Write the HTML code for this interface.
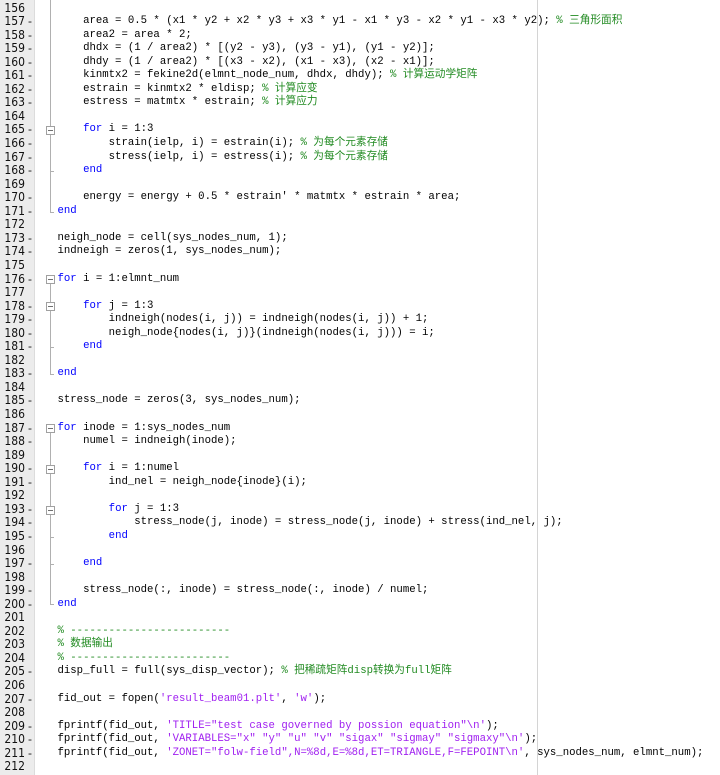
<!DOCTYPE html>
<html><head><meta charset="utf-8"><style>
body{margin:0;width:720px;height:775px;background:#fff;position:relative;overflow:hidden}
#g{position:absolute;left:0;top:0;width:34px;height:775px;background:#ececec;border-right:1px solid #dcdcdc}
.ln{position:absolute;left:0;width:25px;text-align:right;font:12px "DejaVu Sans Condensed","Liberation Sans",sans-serif;color:#111;height:13.55px;line-height:13.55px}
.d{position:absolute;left:28px;font:12px "Liberation Sans",sans-serif;color:#222;line-height:13.55px}
.c{position:absolute;left:57.5px;white-space:pre;font:10.67px "Liberation Mono","Noto Sans CJK SC",monospace;color:#000;line-height:13.55px;height:13.55px}
.k{color:#0000ff}.m{color:#228b22}.s{color:#a020f0}
#rm{position:absolute;left:537px;top:0;width:1px;height:775px;background:#d4d4d4}
.vl{position:absolute;left:50px;width:1px;background:#b0b0b0}
.tk{position:absolute;left:50px;width:4px;height:1px;background:#b0b0b0}
.bx{position:absolute;left:46px;width:7px;height:7px;border:1px solid #a0a0a0;background:#fff;box-sizing:content-box}
.bx:after{content:"";position:absolute;left:1px;top:3px;width:5px;height:1px;background:#707070}
</style></head><body>
<div id="g"></div><div id="rm"></div>
<div id="L"></div>
<script>
var T=1.5,H=13.55;
var code={
157:'    area = 0.5 * (x1 * y2 + x2 * y3 + x3 * y1 - x1 * y3 - x2 * y1 - x3 * y2); <span class="m">% 三角形面积</span>',
158:'    area2 = area * 2;',
159:'    dhdx = (1 / area2) * [(y2 - y3), (y3 - y1), (y1 - y2)];',
160:'    dhdy = (1 / area2) * [(x3 - x2), (x1 - x3), (x2 - x1)];',
161:'    kinmtx2 = fekine2d(elmnt_node_num, dhdx, dhdy); <span class="m">% 计算运动学矩阵</span>',
162:'    estrain = kinmtx2 * eldisp; <span class="m">% 计算应变</span>',
163:'    estress = matmtx * estrain; <span class="m">% 计算应力</span>',
165:'    <span class="k">for</span> i = 1:3',
166:'        strain(ielp, i) = estrain(i); <span class="m">% 为每个元素存储</span>',
167:'        stress(ielp, i) = estress(i); <span class="m">% 为每个元素存储</span>',
168:'    <span class="k">end</span>',
170:"    energy = energy + 0.5 * estrain' * matmtx * estrain * area;",
171:'<span class="k">end</span>',
173:'neigh_node = cell(sys_nodes_num, 1);',
174:'indneigh = zeros(1, sys_nodes_num);',
176:'<span class="k">for</span> i = 1:elmnt_num',
178:'    <span class="k">for</span> j = 1:3',
179:'        indneigh(nodes(i, j)) = indneigh(nodes(i, j)) + 1;',
180:'        neigh_node{nodes(i, j)}(indneigh(nodes(i, j))) = i;',
181:'    <span class="k">end</span>',
183:'<span class="k">end</span>',
185:'stress_node = zeros(3, sys_nodes_num);',
187:'<span class="k">for</span> inode = 1:sys_nodes_num',
188:'    numel = indneigh(inode);',
190:'    <span class="k">for</span> i = 1:numel',
191:'        ind_nel = neigh_node{inode}(i);',
193:'        <span class="k">for</span> j = 1:3',
194:'            stress_node(j, inode) = stress_node(j, inode) + stress(ind_nel, j);',
195:'        <span class="k">end</span>',
197:'    <span class="k">end</span>',
199:'    stress_node(:, inode) = stress_node(:, inode) / numel;',
200:'<span class="k">end</span>',
202:'<span class="m">% -------------------------</span>',
203:'<span class="m">% 数据输出</span>',
204:'<span class="m">% -------------------------</span>',
205:'disp_full = full(sys_disp_vector); <span class="m">% 把稀疏矩阵disp转换为full矩阵</span>',
207:"fid_out = fopen(<span class=\"s\">'result_beam01.plt'</span>, <span class=\"s\">'w'</span>);",
209:"fprintf(fid_out, <span class=\"s\">'TITLE=\"test case governed by possion equation\"\\n'</span>);",
210:"fprintf(fid_out, <span class=\"s\">'VARIABLES=\"x\" \"y\" \"u\" \"v\" \"sigax\" \"sigmay\" \"sigmaxy\"\\n'</span>);",
211:"fprintf(fid_out, <span class=\"s\">'ZONET=\"folw-field\",N=%8d,E=%8d,ET=TRIANGLE,F=FEPOINT\\n'</span>, sys_nodes_num, elmnt_num);"
};
var noDash=[156,164,169,172,175,177,182,184,186,189,192,196,198,201,202,203,204,206,208,212];
var h='';
function y(n){return T+(n-156)*H;}
function cy(n){return Math.round(y(n)+H/2);}
for(var n=156;n<=212;n++){
 h+='<div class="ln" style="top:'+y(n)+'px">'+n+'</div>';
 if(noDash.indexOf(n)<0)h+='<div class="d" style="top:'+y(n)+'px">-</div>';
 if(code[n])h+='<div class="c" style="top:'+y(n)+'px">'+code[n]+'</div>';
}
function vl(a,b){h+='<div class="vl" style="top:'+a+'px;height:'+(b-a)+'px"></div>';}
function tk(n){h+='<div class="tk" style="top:'+cy(n)+'px"></div>';}
function bx(n){h+='<div class="bx" style="top:'+(cy(n)-4)+'px"></div>';}
vl(0,cy(171));tk(171);tk(168);bx(165);
vl(cy(176),cy(183));tk(183);tk(181);bx(176);bx(178);
vl(cy(187),cy(200));tk(200);tk(197);tk(195);bx(187);bx(190);bx(193);
document.getElementById('L').innerHTML=h;
</script>
</body></html>
